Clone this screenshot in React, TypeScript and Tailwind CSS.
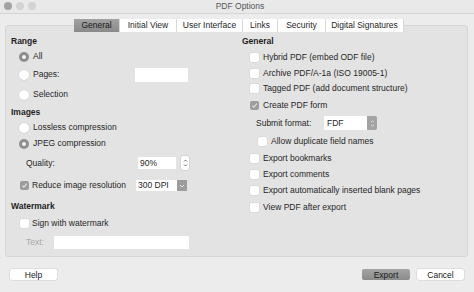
import React from "react";

const font = { fontFamily: '"Liberation Sans", Arial, sans-serif' };

const tabs = [
    { label: "General", w: "w-[46px]", active: true },
    { label: "Initial View", w: "w-[57px]" },
    { label: "User Interface", w: "w-[66px]" },
    { label: "Links", w: "w-[35px]" },
    { label: "Security", w: "w-[48px]" },
    { label: "Digital Signatures", w: "w-[78px]" },
];

const Radio = ({ on }: { on?: boolean }) =>
    on ? (
        <span className="flex h-[10px] w-[10px] shrink-0 items-center justify-center rounded-full bg-[#8f8f8f]">
            <span className="h-[4px] w-[4px] rounded-full bg-[#f4f4f4]" />
        </span>
    ) : (
        <span className="h-[10px] w-[10px] shrink-0 rounded-full bg-white shadow-[0_0_0_0.5px_#cfcfcf]" />
    );

const Check = ({ on }: { on?: boolean }) =>
    on ? (
        <span className="flex h-[9px] w-[9px] shrink-0 items-center justify-center rounded-[2px] bg-[#9c9c9c]">
            <svg width="7" height="7" viewBox="0 0 8 8">
                <path d="M1.5 4.2 L3.3 6 L6.6 1.8" fill="none" stroke="#e8e8e8" strokeWidth="1.2" />
            </svg>
        </span>
    ) : (
        <span className="h-[9px] w-[9px] shrink-0 rounded-[2px] bg-white shadow-[0_0_0_0.5px_#d4d4d4]" />
    );

const Heading = ({ children, h }: { children: React.ReactNode; h: string }) => (
    <div className={`flex items-center font-bold text-[#1e1e1e] ${h}`}>{children}</div>
);

export default function App() {
    return (
        <div
            className="flex h-[292px] w-[474px] flex-col overflow-hidden bg-[#ececec] text-[8.5px] text-[#262626]"
            style={font}
        >
            {/* title bar */}
            <div className="relative flex h-[14px] shrink-0 items-center justify-center border-b border-[#d6d6d6] bg-[#e9e9e9]">
                <div className="absolute left-[4px] top-[2px] flex gap-[4px]">
                    <span className="h-[8px] w-[8px] rounded-full bg-[#a3a3a3]" />
                    <span className="h-[8px] w-[8px] rounded-full bg-[#d3d3d3]" />
                    <span className="h-[8px] w-[8px] rounded-full bg-[#d3d3d3]" />
                </div>
                <span className="pl-[6px] text-[#555]">PDF Options</span>
            </div>

            {/* tabs */}
            <div className="relative z-10 mt-[5px] flex h-[13px] pl-[74px]">
                {tabs.map((t) => (
                    <div
                        key={t.label}
                        className={`flex items-center justify-center border-r border-[#d8d8d8] ${t.w} ${
                            t.active
                                ? "bg-gradient-to-b from-[#a2a2a2] to-[#8a8a8a] text-[#1a1a1a]"
                                : "bg-white text-[#262626]"
                        }`}
                    >
                        {t.label}
                    </div>
                ))}
            </div>

            {/* panel */}
            <div className="mx-[5px] -mt-[7px] flex h-[232px] w-[463px] rounded-[3px] border border-[#d6d6d6] bg-[#e3e3e3] pt-[7px]">
                {/* left column */}
                <div className="flex w-[236px] flex-col pl-[5px]">
                    <Heading h="h-[16px]">Range</Heading>
                    <div className="flex h-[15px] items-center gap-[4px] pl-[8px]">
                        <Radio on />
                        <span>All</span>
                    </div>
                    <div className="flex h-[21px] items-center pl-[8px]">
                        <Radio />
                        <span className="ml-[4px] w-[102px]">Pages:</span>
                        <span className="h-[14px] w-[53px] bg-white" />
                    </div>
                    <div className="flex h-[19px] items-center gap-[4px] pl-[8px]">
                        <Radio />
                        <span>Selection</span>
                    </div>
                    <Heading h="h-[16px]">Images</Heading>
                    <div className="flex h-[15px] items-center gap-[4px] pl-[8px]">
                        <Radio />
                        <span>Lossless compression</span>
                    </div>
                    <div className="flex h-[17px] items-center gap-[4px] pl-[8px]">
                        <Radio on />
                        <span>JPEG compression</span>
                    </div>
                    <div className="flex h-[22px] items-center pl-[15px]">
                        <span className="w-[112px]">Quality:</span>
                        <span className="flex h-[12px] w-[38px] items-center bg-white pl-[2px]">90%</span>
                        <span className="ml-[5px] flex h-[14px] w-[8px] flex-col items-center justify-center rounded-[2px] bg-white shadow-[0_0_0_0.5px_#c8c8c8]">
                            <svg width="5" height="10" viewBox="0 0 5 10">
                                <path d="M1 3.5 L2.5 2 L4 3.5 M1 6.5 L2.5 8 L4 6.5" fill="none" stroke="#555" strokeWidth="0.8" />
                            </svg>
                        </span>
                    </div>
                    <div className="flex h-[23px] items-center pl-[9px]">
                        <Check on />
                        <span className="ml-[3px] w-[104px]">Reduce image resolution</span>
                        <span className="flex h-[11px] w-[51px]">
                            <span className="flex flex-1 items-center bg-white pl-[2px]">300 DPI</span>
                            <span className="flex w-[10px] items-center justify-center bg-[#9c9c9c]">
                                <svg width="6" height="4" viewBox="0 0 6 4">
                                    <path d="M1 1 L3 3 L5 1" fill="none" stroke="#eee" strokeWidth="0.9" />
                                </svg>
                            </span>
                        </span>
                    </div>
                    <Heading h="h-[19px]">Watermark</Heading>
                    <div className="flex h-[14px] items-center gap-[3px] pl-[9px]">
                        <Check />
                        <span>Sign with watermark</span>
                    </div>
                    <div className="flex h-[24px] items-center pl-[15px]">
                        <span className="w-[28px] text-[#a8a8a8]">Text:</span>
                        <span className="h-[13px] w-[135px] bg-white" />
                    </div>
                </div>

                {/* right column */}
                <div className="flex flex-1 flex-col">
                    <Heading h="h-[16px]">General</Heading>
                    {[
                        { label: "Hybrid PDF (embed ODF file)", h: "h-[16px]" },
                        { label: "Archive PDF/A-1a (ISO 19005-1)", h: "h-[16px]" },
                        { label: "Tagged PDF (add document structure)", h: "h-[15px]" },
                        { label: "Create PDF form", h: "h-[18px]", on: true },
                    ].map((r) => (
                        <div key={r.label} className={`flex items-center gap-[4px] pl-[8px] ${r.h}`}>
                            <Check on={r.on} />
                            <span>{r.label}</span>
                        </div>
                    ))}
                    <div className="flex h-[18px] items-center pl-[14px]">
                        <span className="w-[68px]">Submit format:</span>
                        <span className="flex h-[14px] w-[53px]">
                            <span className="flex flex-1 items-center bg-white pl-[3px]">FDF</span>
                            <span className="flex w-[10px] items-center justify-center rounded-r-[2px] bg-[#a3a3a3]">
                                <svg width="5" height="9" viewBox="0 0 5 9">
                                    <path d="M1 3.2 L2.5 1.8 L4 3.2 M1 5.8 L2.5 7.2 L4 5.8" fill="none" stroke="#f0f0f0" strokeWidth="0.8" />
                                </svg>
                            </span>
                        </span>
                    </div>
                    <div className="flex h-[18px] items-center gap-[4px] pl-[16px]">
                        <Check />
                        <span>Allow duplicate field names</span>
                    </div>
                    {[
                        { label: "Export bookmarks", h: "h-[16px]" },
                        { label: "Export comments", h: "h-[16px]" },
                        { label: "Export automatically inserted blank pages", h: "h-[17px]" },
                        { label: "View PDF after export", h: "h-[16px]" },
                    ].map((r) => (
                        <div key={r.label} className={`flex items-center gap-[4px] pl-[8px] ${r.h}`}>
                            <Check />
                            <span>{r.label}</span>
                        </div>
                    ))}
                </div>
            </div>

            {/* footer buttons */}
            <div className="mt-[12px] flex h-[11px] items-stretch px-[10px]">
                <button className="w-[47px] rounded-[2px] bg-white text-[#222] shadow-[0_0_0_0.5px_#d0d0d0]">Help</button>
                <div className="flex-1" />
                <button className="w-[48px] rounded-[2px] bg-gradient-to-b from-[#a4a4a4] to-[#8b8b8b] text-[#1a1a1a]">
                    Export
                </button>
                <button className="ml-[7px] w-[47px] rounded-[2px] bg-white text-[#222] shadow-[0_0_0_0.5px_#d0d0d0]">
                    Cancel
                </button>
            </div>
        </div>
    );
}
